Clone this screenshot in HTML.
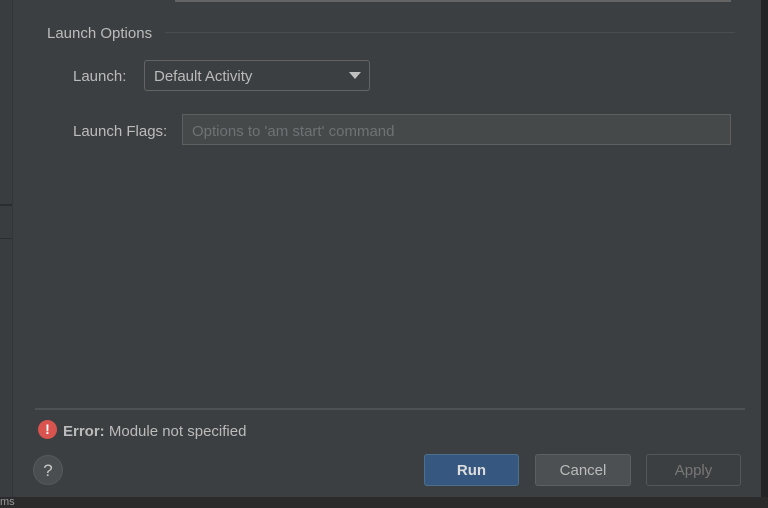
<!DOCTYPE html>
<html><head><style>
*{margin:0;padding:0;box-sizing:border-box}
body{width:768px;height:503px;background:#2b2b2b;position:relative;overflow:hidden;font-family:"Liberation Sans",sans-serif;color:#bbbbbb;font-size:15px}
.a{position:absolute}
</style></head><body>
<div class="a" style="left:0;top:0;width:13px;height:503px;background:#3a3d40;border-right:1px solid #333537"></div>
<div class="a" style="left:0;top:204px;width:12px;height:2px;background:#2b2d2f"></div>
<div class="a" style="left:0;top:238px;width:12px;height:1px;background:#2b2d2f"></div>
<div class="a" style="left:13px;top:0;width:748px;height:497px;background:#3c3f41"></div>
<div class="a" style="left:761px;top:0;width:7px;height:503px;background:#232425"></div>
<div class="a" style="left:0;top:497px;width:768px;height:6px;background:#2b2b2b"></div>
<div class="a" style="left:175px;top:0;width:556px;height:2px;background:#646464"></div>
<div class="a" style="left:47px;top:25px;font-size:15px;color:#bbb">Launch Options</div>
<div class="a" style="left:165px;top:32px;width:570px;height:1px;background:#4a4d4f"></div>
<div class="a" style="left:73px;top:68px">Launch:</div>
<div class="a" style="left:144px;top:60px;width:226px;height:31px;border:1px solid #646464;border-radius:3px;background:#3c3f41"></div>
<div class="a" style="left:154px;top:68px">Default Activity</div>
<div class="a" style="left:349px;top:72px;width:0;height:0;border-left:6px solid transparent;border-right:6px solid transparent;border-top:7px solid #c0c0c0"></div>
<div class="a" style="left:73px;top:123px">Launch Flags:</div>
<div class="a" style="left:182px;top:114px;width:549px;height:31px;border:1px solid #5e6060;background:#45494a"></div>
<div class="a" style="left:192px;top:123px;color:#6f7274">Options to 'am start' command</div>
<div class="a" style="left:35px;top:408px;width:710px;height:2px;background:#4f5254"></div>
<div class="a" style="left:38px;top:420px;width:19px;height:19px;border-radius:50%;background:#d9534f;color:#fff;font-weight:bold;font-size:14px;text-align:center;line-height:19px">!</div>
<div class="a" style="left:63px;top:423px"><b>Error:</b> Module not specified</div>
<div class="a" style="left:33px;top:455px;width:30px;height:30px;border-radius:50%;background:#4b4e50;border:1px solid #56595b;text-align:center;line-height:29px;font-size:17px;color:#c8c8c8">?</div>
<div class="a" style="left:424px;top:454px;width:95px;height:32px;background:#365880;border:1px solid #4c708c;border-radius:3px;text-align:center;line-height:32px;font-weight:bold;color:#ddd">Run</div>
<div class="a" style="left:535px;top:454px;width:96px;height:32px;background:#4c5052;border:1px solid #5e6060;border-radius:3px;text-align:center;line-height:32px;color:#bbb">Cancel</div>
<div class="a" style="left:646px;top:454px;width:95px;height:32px;background:#3c3f41;border:1px solid #55585a;border-radius:3px;text-align:center;line-height:32px;color:#777">Apply</div>
<div class="a" style="left:0;top:496px;font-size:11px;color:#999">ms</div>
</body></html>
